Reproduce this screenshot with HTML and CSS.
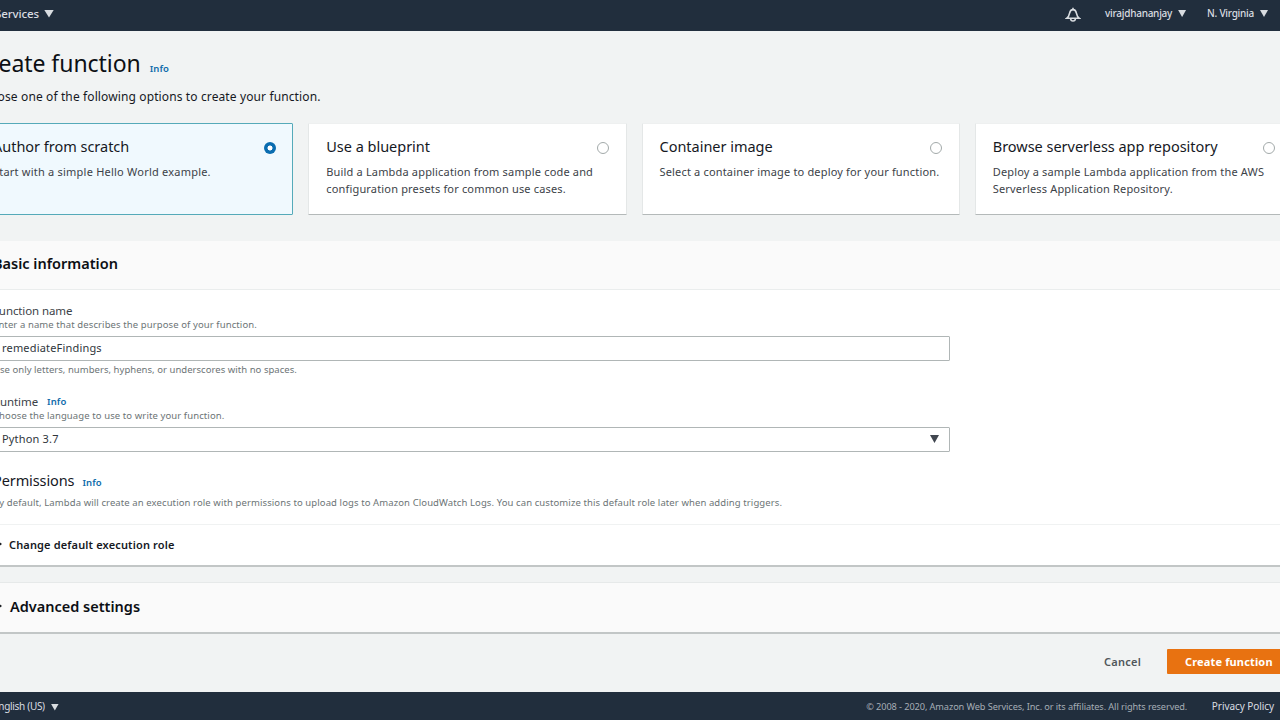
FILE: index.html
```html
<!DOCTYPE html>
<html lang="en">
<head>
    <meta charset="UTF-8">
    <meta name="viewport" content="width=device-width, initial-scale=1.0">
    <title>Create function - Lambda</title>
    <link rel="stylesheet" href="styles.css">
</head>
<body>
    <div class="page">
        <header class="navbar">
            <div class="nav-services">Services <span class="caret caret-lg"></span></div>
            <div class="nav-right">
                <svg class="bell" width="16" height="16" viewBox="0 0 16 16">
                    <path d="M1.6 11.3 C3.6 10 4.2 8.6 4.6 6.2 C5 3.9 6.2 2.6 8 2.6 C9.8 2.6 11 3.9 11.4 6.2 C11.8 8.6 12.4 10 14.4 11.3 Z M8 2.6 V0.8 M5.6 11.8 C5.8 14.8 10.2 14.8 10.4 11.8"/>
                </svg>
                <div class="nav-user">virajdhananjay <span class="caret"></span></div>
                <div class="nav-region">N. Virginia <span class="caret"></span></div>
            </div>
        </header>

        <main class="content">
            <div class="title-row">
                <h1>Create function</h1>
                <a class="info">Info</a>
            </div>
            <p class="subtitle">Choose one of the following options to create your function.</p>

            <div class="options">
                <div class="option selected">
                    <div class="option-head"><h3>Author from scratch</h3><span class="radio checked"></span></div>
                    <p>Start with a simple Hello World example.</p>
                </div>
                <div class="option">
                    <div class="option-head"><h3>Use a blueprint</h3><span class="radio"></span></div>
                    <p>Build a Lambda application from sample code and configuration presets for common use cases.</p>
                </div>
                <div class="option">
                    <div class="option-head"><h3>Container image</h3><span class="radio"></span></div>
                    <p>Select a container image to deploy for your function.</p>
                </div>
                <div class="option">
                    <div class="option-head"><h3>Browse serverless app repository</h3><span class="radio"></span></div>
                    <p>Deploy a sample Lambda application from the AWS Serverless Application Repository.</p>
                </div>
            </div>

            <section class="panel">
                <div class="panel-head"><h2>Basic information</h2></div>
                <div class="panel-body">
                    <div class="label">Function name</div>
                    <div class="hint">Enter a name that describes the purpose of your function.</div>
                    <div class="field">remediateFindings</div>
                    <div class="hint hint-below">Use only letters, numbers, hyphens, or underscores with no spaces.</div>

                    <div class="label label-runtime">Runtime <a class="info">Info</a></div>
                    <div class="hint">Choose the language to use to write your function.</div>
                    <div class="field select">Python 3.7 <span class="caret caret-dark"></span></div>

                    <div class="permissions"><h3>Permissions</h3><a class="info">Info</a></div>
                    <div class="hint hint-perm">By default, Lambda will create an execution role with permissions to upload logs to Amazon CloudWatch Logs. You can customize this default role later when adding triggers.</div>
                </div>
                <div class="expander"><span class="arrow"></span>Change default execution role</div>
            </section>

            <section class="panel advanced">
                <span class="arrow"></span><h2>Advanced settings</h2>
            </section>

            <div class="actions">
                <button class="btn-cancel">Cancel</button>
                <button class="btn-create">Create function</button>
            </div>
        </main>

        <footer class="footer">
            <div class="language">English (US) <span class="caret"></span></div>
            <div class="legal">
                <span class="copyright">© 2008 - 2020, Amazon Web Services, Inc. or its affiliates. All rights reserved.</span>
                <span class="privacy">Privacy Policy</span>
            </div>
        </footer>
    </div>
</body>
</html>
```
FILE: styles.css
```css
* {
    box-sizing: border-box;
}
body {
    margin: 0;
    font-family: "Noto Sans", sans-serif;
    font-size: 12px;
    color: #16191f;
    background-color: #f1f3f3;
    overflow: hidden;
}
h1, h2, h3, p {
    margin: 0;
    font-weight: normal;
}
.page {
    width: 1318px;
    height: 720px;
    margin-left: -25px;
    display: flex;
    flex-direction: column;
}

/* top bar */
.navbar {
    height: 31px;
    padding: 0 25px 5px 20px;
    display: flex;
    justify-content: space-between;
    align-items: center;
    background-color: #212e3d;
    color: #d9dde1;
    font-weight: 500;
}
.nav-services, .nav-user, .nav-region, .nav-right {
    display: flex;
    align-items: center;
    white-space: nowrap;
}
.nav-services {
    font-size: 11.5px;
    letter-spacing: -0.1px;
    gap: 5px;
}
.nav-user, .nav-region {
    font-size: 10px;
    letter-spacing: -0.25px;
    gap: 6px;
}
.nav-user {
    margin-left: 24px;
}
.nav-region {
    margin-left: 21px;
}
.bell {
    margin-top: 4px;
    fill: none;
    stroke: #d9dde1;
    stroke-width: 1.6;
}
.caret {
    width: 8px;
    height: 7px;
    background-color: #d9dde1;
    clip-path: polygon(0 0, 100% 0, 50% 100%);
}
.navbar .caret {
    margin-top: 1px;
}
.caret-lg {
    width: 10px;
    height: 8px;
}
.caret-dark {
    width: 9px;
    height: 8px;
    margin-top: 1px;
    background-color: #414750;
}

.content {
    flex: 1;
    padding-top: 16px;
}
.title-row {
    display: flex;
    align-items: baseline;
    gap: 9px;
    height: 32px;
}
h1 {
    font-size: 23px;
    line-height: 32px;
    letter-spacing: -0.05px;
    color: #0c0f14;
}
.info {
    color: #0f6cab;
    font-size: 9.5px;
    font-weight: 600;
    letter-spacing: 0.1px;
}
.subtitle {
    margin-top: 8px;
    font-size: 12px;
    line-height: 20px;
    letter-spacing: 0.12px;
}

/* option cards */
.options {
    display: grid;
    grid-template-columns: repeat(4, 1fr);
    gap: 15px;
    margin-top: 16px;
}
.option {
    height: 92px;
    padding: 12px 17px 0;
    background-color: #fff;
    border: 1px solid #e4e7e7;
    border-top-color: #eef0f0;
    border-bottom-color: #b4b9b9;
    border-radius: 1px;
}
.option.selected {
    background-color: #f0f9fe;
    border-color: #55aab9;
}
.option-head {
    display: flex;
    justify-content: space-between;
    align-items: flex-start;
    height: 22px;
}
.option h3 {
    font-size: 14.5px;
    line-height: 20px;
    letter-spacing: -0.02px;
}
.option p {
    margin-top: 6px;
    font-size: 11px;
    line-height: 16.5px;
    letter-spacing: 0.17px;
    color: #3c4248;
}
.selected p {
    letter-spacing: 0.22px;
}
.radio {
    width: 12px;
    height: 12px;
    margin-top: 6px;
    border: 1px solid #a3aaaa;
    border-radius: 50%;
    background-color: #fff;
}
.radio.checked {
    border: none;
    margin-right: -1px;
    background: radial-gradient(circle, #fff 2.2px, #0a6db0 2.8px);
}

/* panels */
.panel {
    margin-top: 26px;
    background-color: #fff;
    border-bottom: 2px solid #c2c6c6;
}
.panel-head {
    height: 49px;
    padding: 10px 18px 0;
    background-color: #fafafa;
    border-bottom: 1px solid #eaeded;
}
h2 {
    font-size: 14.5px;
    line-height: 24px;
    font-weight: 600;
    color: #0c0f14;
}
.panel-body {
    height: 234px;
    padding: 13px 18px 0;
}
.label {
    display: flex;
    align-items: center;
    gap: 9px;
    height: 15px;
    font-size: 11.5px;
    line-height: 14px;
    letter-spacing: -0.1px;
    color: #3c4248;
}
.label-runtime {
    margin-top: 17px;
}
.hint {
    height: 14px;
    font-size: 9.5px;
    line-height: 14px;
    letter-spacing: 0.1px;
    color: #6c7476;
    white-space: nowrap;
}
.hint-below {
    margin-top: 2px;
    letter-spacing: 0.04px;
}
.field {
    display: flex;
    align-items: center;
    justify-content: space-between;
    width: 957px;
    height: 25px;
    margin-top: 4px;
    padding: 0 10px 2px 8px;
    border: 1px solid #b0b6b6;
    border-radius: 1px;
    font-size: 11px;
    letter-spacing: 0.18px;
    color: #30363c;
}
.permissions {
    display: flex;
    align-items: baseline;
    gap: 8px;
    margin-top: 17px;
}
.permissions h3 {
    font-size: 14.5px;
    line-height: 22px;
    letter-spacing: -0.1px;
}
.hint-perm {
    margin-top: 5px;
}
.expander {
    display: flex;
    align-items: center;
    height: 41px;
    padding-left: 22px;
    padding-bottom: 2px;
    border-top: 1px solid #f0f2f2;
    font-size: 11px;
    font-weight: 600;
    letter-spacing: 0.15px;
}
.arrow {
    width: 5px;
    height: 8px;
    margin-right: 7px;
    background-color: #16191f;
    clip-path: polygon(0 0, 100% 50%, 0 100%);
}
.advanced {
    display: flex;
    align-items: center;
    height: 52px;
    margin-top: 15px;
    padding-left: 22px;
    padding-bottom: 3px;
    background-color: #fafafa;
    border-top: 1px solid #e6e9e9;
}
.advanced .arrow {
    margin-right: 8px;
}

.actions {
    display: flex;
    justify-content: flex-end;
    gap: 8px;
    margin-top: 15px;
}
.actions button {
    height: 25px;
    padding: 0 18px;
    border: none;
    border-radius: 1px;
    background: none;
    font-family: inherit;
    font-size: 11px;
    font-weight: 600;
    letter-spacing: 0.25px;
    color: #50575b;
}
.actions .btn-create {
    width: 126px;
    padding: 0 18px;
    background-color: #e87211;
    color: #fff;
    text-align: left;
    font-weight: 700;
    letter-spacing: 0.15px;
}

.footer {
    display: flex;
    justify-content: space-between;
    align-items: center;
    height: 28px;
    padding: 0 19px 0 18px;
    background-color: #212e3d;
    color: #d9dde1;
    font-size: 10px;
}
.language {
    display: flex;
    align-items: center;
    gap: 6px;
    letter-spacing: -0.3px;
}
.language .caret {
    margin-top: 2px;
}
.copyright {
    margin-right: 22px;
    font-size: 9.2px;
    letter-spacing: -0.09px;
    color: #a5adb5;
}
.privacy {
    letter-spacing: -0.07px;
}
```
